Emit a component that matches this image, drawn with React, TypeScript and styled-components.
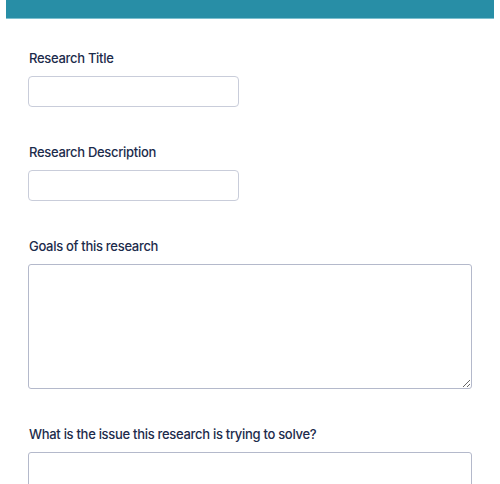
import React from 'react';
import styled, { createGlobalStyle } from 'styled-components';

const GlobalStyle = createGlobalStyle`
  body {
    margin: 0;
    background: #ffffff;
    font-family: Inter, "Noto Sans", sans-serif;
  }
`;

const Page = styled.div`
  width: 500px;
  height: 484px;
  overflow: hidden;
  background: #ffffff;
`;

const TopBar = styled.div`
  margin: 0 6px;
  height: 18px;
  background: #288ea6;
  border-bottom: 1px solid #7cbfcf;
`;

const Form = styled.form`
  display: flex;
  flex-direction: column;
  gap: 37px;
  padding: 31px 28px 0 28px;
`;

const Field = styled.div`
  display: flex;
  flex-direction: column;
  gap: 10px;
`;

const Label = styled.label`
  display: block;
  padding-left: 1px;
  font-size: 13px;
  line-height: 16px;
  font-weight: 500;
  letter-spacing: -0.3px;
  color: #1c2b4b;
`;

const TextInput = styled.input`
  box-sizing: border-box;
  width: 211px;
  height: 31px;
  border: 1px solid #c9cdda;
  border-radius: 4px;
  background: #ffffff;
  outline: none;
  font-family: inherit;
`;

const TextArea = styled.textarea`
  box-sizing: border-box;
  width: 444px;
  height: 125px;
  border: 1.5px solid #b4b9cb;
  border-radius: 3px;
  background: #ffffff;
  outline: none;
  resize: vertical;
  font-family: inherit;
`;

const fields = [
  { label: 'Research Title', kind: 'input' },
  { label: 'Research Description', kind: 'input' },
  { label: 'Goals of this research', kind: 'area' },
  { label: 'What is the issue this research is trying to solve?', kind: 'area' },
];

export default function App() {
  return (
    <Page>
      <GlobalStyle />
      <TopBar />
      <Form>
        {fields.map((f, i) => (
          <Field key={i}>
            <Label htmlFor={`f${i}`}>{f.label}</Label>
            {f.kind === 'input' ? <TextInput id={`f${i}`} type="text" /> : <TextArea id={`f${i}`} />}
          </Field>
        ))}
      </Form>
    </Page>
  );
}
